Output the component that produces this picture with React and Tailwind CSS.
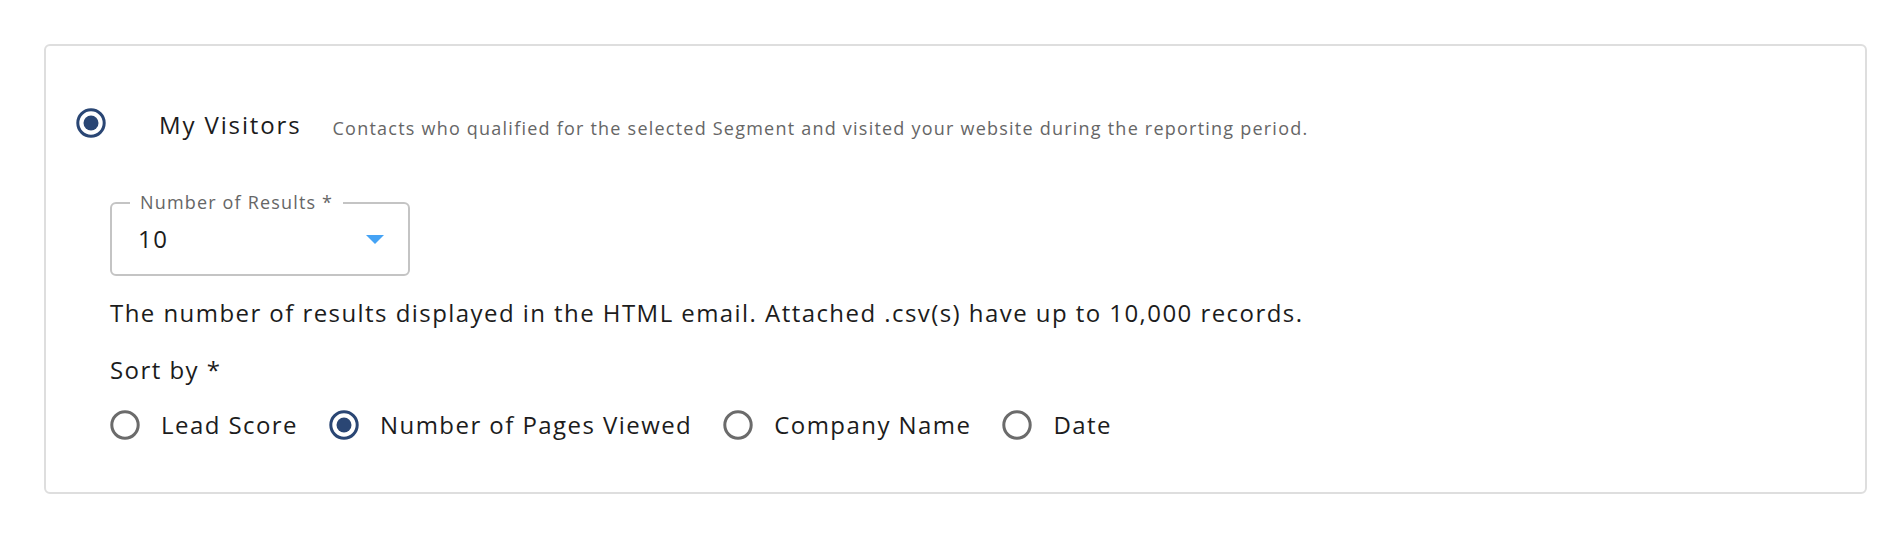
import React from "react";

function Radio({ checked }) {
  return (
    <svg width="30" height="30" viewBox="0 0 30 30" className="shrink-0">
      <circle
        cx="15"
        cy="15"
        r="13.2"
        fill="none"
        stroke={checked ? "#2a4674" : "#6b6b6b"}
        strokeWidth="3"
      />
      {checked && <circle cx="15" cy="15" r="7.5" fill="#2a4674" />}
    </svg>
  );
}

const font = { fontFamily: '"Open Sans", "Liberation Sans", sans-serif' };

export default function App() {
  const options = [
    { label: "Lead Score", checked: false },
    { label: "Number of Pages Viewed", checked: true },
    { label: "Company Name", checked: false },
    { label: "Date", checked: false },
  ];
  return (
    <div className="w-[1894px] h-[550px] bg-white pt-[44px] pl-[44px]" style={font}>
      <div className="w-[1823px] border-2 border-[#dedede] rounded-[6px] pt-[59px] pb-[49px] pl-[30px]">
        <div className="flex items-center h-[36px]">
          <Radio checked />
          <span className="ml-[53px] mt-[4px] text-[24px] leading-[32px] tracking-[0.078em] text-[#1c1c1c]">My Visitors</span>
          <span className="ml-[31px] mt-[9px] text-[18px] leading-[24px] tracking-[0.068em] text-[#666666]">
            Contacts who qualified for the selected Segment and visited your website during the reporting period.
          </span>
        </div>
        <div className="ml-[34px] flex flex-col items-start tracking-[0.09em]">
          <div className="relative mt-[61px] w-[300px] h-[74px] border-2 border-[#c4c4c4] rounded-[6px] flex items-center justify-between pl-[26px] pr-[24px]">
            <span className="absolute left-[18px] -top-[14px] bg-white px-[10px] text-[18px] leading-[24px] tracking-[0.065em] text-[#666666]">
              Number of Results *
            </span>
            <span className="text-[24px] leading-[32px] text-[#1c1c1c]">10</span>
            <svg width="18" height="9" viewBox="0 0 18 9">
              <path d="M0 0 L18 0 L9 9 Z" fill="#45a3f5" />
            </svg>
          </div>
          <p className="mt-[21px] text-[24px] leading-[32px] text-[#1c1c1c]">
            The number of results displayed in the HTML email. Attached .csv(s) have up to 10,000 records.
          </p>
          <p className="mt-[25px] text-[24px] leading-[32px] text-[#1c1c1c]">Sort by *</p>
          <div className="mt-[21px] flex items-center h-[36px] gap-[31px]">
            {options.map((o) => (
              <div key={o.label} className="flex items-center gap-[21px]">
                <Radio checked={o.checked} />
                <span className="text-[24px] leading-[32px] text-[#1c1c1c]">{o.label}</span>
              </div>
            ))}
          </div>
        </div>
      </div>
    </div>
  );
}
